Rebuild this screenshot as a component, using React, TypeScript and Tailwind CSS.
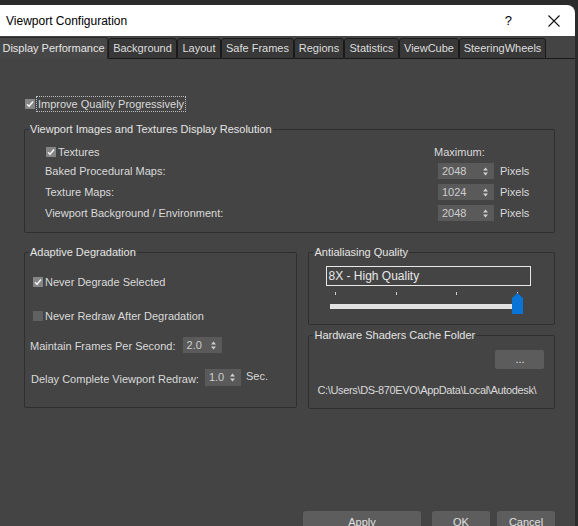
import React from "react";

const tabs = [
  { label: "Display Performance", w: "w-[108px]", active: true },
  { label: "Background", w: "w-[69px]" },
  { label: "Layout", w: "w-[44px]" },
  { label: "Safe Frames", w: "w-[73px]" },
  { label: "Regions", w: "w-[50px]" },
  { label: "Statistics", w: "w-[55px]" },
  { label: "ViewCube", w: "w-[60px]" },
  { label: "SteeringWheels", w: "w-[87px]" },
];

function Check({ checked }: { checked?: boolean }) {
  return (
    <span
      className={
        "flex h-[10px] w-[10px] shrink-0 items-center justify-center " +
        (checked ? "bg-[#858585]" : "bg-[#606060]")
      }
    >
      {checked && (
        <svg width="8" height="8" viewBox="0 0 8 8">
          <path d="M1 4.3 L3 6.3 L7 1.6" stroke="#f0f0f0" strokeWidth="1.6" fill="none" />
        </svg>
      )}
    </span>
  );
}

function Arrows() {
  return (
    <svg width="5" height="9" viewBox="0 0 5 9" className="shrink-0">
      <path d="M0 3.5 L2.5 0.5 L5 3.5 Z" fill="#cfcfcf" />
      <path d="M0 5.5 L2.5 8.5 L5 5.5 Z" fill="#cfcfcf" />
    </svg>
  );
}

function Spinner({ value, className }: { value: string; className: string }) {
  return (
    <div
      className={
        "flex items-center justify-between bg-[#5a5a5a] pl-[4px] pr-[6px] text-[#cdcdcd] " +
        className
      }
    >
      <span className="leading-none">{value}</span>
      <Arrows />
    </div>
  );
}

function Group({
  title,
  className,
  inner,
  children,
}: {
  title: string;
  className?: string;
  inner?: string;
  children: React.ReactNode;
}) {
  return (
    <fieldset className={"rounded-[2px] border border-[#2f2f2f] " + (className ?? "")}>
      <legend className="ml-[4px] px-[1px] leading-[14px] text-[#e4e4e4]">{title}</legend>
      <div className={inner}>{children}</div>
    </fieldset>
  );
}

export default function App() {
  return (
    <div className="h-[526px] w-[578px] overflow-hidden bg-[#2b2b2b] pt-[5px] font-['Liberation_Sans',Arial,sans-serif] text-[11px] text-[#dadada]">
      <div className="flex h-[521px] w-[575px] flex-col overflow-hidden rounded-tr-[8px] bg-[#444444]">
        {/* title bar */}
        <div className="flex h-[31px] shrink-0 items-center bg-white pl-[6px] pr-[15px] text-black">
          <span className="text-[12px]">Viewport Configuration</span>
          <span className="ml-auto mr-[36px] text-[13px]">?</span>
          <svg width="12" height="12" viewBox="0 0 12 12">
            <path d="M0.5 0.5 L11.5 11.5 M11.5 0.5 L0.5 11.5" stroke="#111" strokeWidth="1.1" />
          </svg>
        </div>

        {/* tabs */}
        <div className="flex h-[23px] shrink-0 items-end">
          {tabs.map((t) =>
            t.active ? (
              <div
                key={t.label}
                className={
                  "flex h-[22px] items-center justify-center rounded-tr-[3px] border-r border-t border-[#2a2a2a] bg-[#474747] text-[#e6e6e6] " +
                  t.w
                }
              >
                {t.label}
              </div>
            ) : (
              <div
                key={t.label}
                className={
                  "flex h-[21px] items-center justify-center rounded-t-[3px] border border-[#1a1a1a] bg-[#383838] text-[#dedede] " +
                  t.w
                }
              >
                {t.label}
              </div>
            )
          )}
          <div className="flex-1 border-b border-[#1a1a1a]" />
        </div>

        {/* body */}
        <div className="flex flex-col pl-[24px] pr-[20px]">
          <div className="mt-[37px] ml-[1px] flex h-[16px] items-center">
            <Check checked />
            <span className="ml-[1px] border border-dotted border-[#bdbdbd] px-[1px] leading-[14px]">
              Improve Quality Progressively
            </span>
          </div>

          <Group
            title="Viewport Images and Textures Display Resolution"
            className="mt-[10px]"
            inner="pb-[11px] pl-[20px]"
          >
            <div className="mt-[9px] flex h-[14px] items-center">
              <div className="flex w-[389px] items-center">
                <span className="ml-[1px]">
                  <Check checked />
                </span>
                <span className="ml-[2px]">Textures</span>
              </div>
              <span>Maximum:</span>
            </div>
            {[
              ["Baked Procedural Maps:", "2048"],
              ["Texture Maps:", "1024"],
              ["Viewport Background / Environment:", "2048"],
            ].map(([label, value], i) => (
              <div key={label} className={(i === 0 ? "mt-[4px]" : "mt-[5px]") + " flex h-[16px] items-center"}>
                <span className="w-[389px]">{label}</span>
                <Spinner value={value} className="ml-[4px] h-[16px] w-[56px]" />
                <span className="ml-[6px]">Pixels</span>
              </div>
            ))}
          </Group>

          <div className="mt-[12px] flex items-start gap-[11px]">
            <Group title="Adaptive Degradation" className="w-[274px]" inner="pb-[21px]">
              <div className="mt-[16px] ml-[8px] flex h-[14px] items-center">
                <Check checked />
                <span className="ml-[2px]">Never Degrade Selected</span>
              </div>
              <div className="mt-[20px] ml-[8px] flex h-[14px] items-center">
                <Check />
                <span className="ml-[2px]">Never Redraw After Degradation</span>
              </div>
              <div className="mt-[14px] ml-[5px] flex h-[16px] items-center">
                <span className="mt-[3px]">Maintain Frames Per Second:</span>
                <Spinner value="2.0" className="ml-[7px] h-[16px] w-[39px]" />
              </div>
              <div className="mt-[16px] ml-[6px] flex h-[17px] items-center">
                <span className="mt-[3px]">Delay Complete Viewport Redraw:</span>
                <Spinner value="1.0" className="ml-[6px] h-[17px] w-[36px]" />
                <span className="ml-[5px] -mt-[2px]">Sec.</span>
              </div>
            </Group>

            <div className="flex w-[247px] flex-col">
              <Group title="Antialiasing Quality" inner="pb-[9px] pl-[17px]">
                <div className="mt-[7px] flex h-[20px] w-[205px] items-center border border-[#e8e8e8] pl-[1px] text-[12px] text-[#e8e8e8]">
                  8X - High Quality
                </div>
                <svg width="205" height="24" viewBox="0 0 205 24" className="mt-[5px] block">
                  <path d="M9.5 1 V4 M70.5 1 V4 M130.5 1 V4 M191.5 1 V4" stroke="#d0d0d0" strokeWidth="1" />
                  <rect x="4" y="13" width="184" height="5" fill="#e2e2e2" />
                  <path d="M186 7 L191.5 2 L197 7 L197 23 L186 23 Z" fill="#0a74d6" />
                </svg>
              </Group>

              <Group title="Hardware Shaders Cache Folder" className="mt-[3px]" inner="pb-[11px] pl-[8px]">
                <div className="mt-[8px] ml-[178px] flex h-[19px] w-[49px] items-center justify-center rounded-[2px] bg-[#5c5c5c] text-[#e0e0e0]">
                  ...
                </div>
                <div className="mt-[14px] w-[229px] overflow-hidden whitespace-nowrap text-[11px] leading-[14px] tracking-[-0.35px]">
                  {"C:\\Users\\DS-870EVO\\AppData\\Local\\Autodesk\\"}
                </div>
              </Group>
            </div>
          </div>

          <div className="mt-[102px] flex justify-end">
            <div className="flex h-[23px] w-[118px] items-center justify-center rounded-t-[3px] bg-[#5d5d5d] text-[#e0e0e0]">
              Apply
            </div>
            <div className="ml-[11px] flex h-[23px] w-[58px] items-center justify-center rounded-t-[3px] bg-[#5d5d5d] text-[#e0e0e0]">
              OK
            </div>
            <div className="ml-[7px] flex h-[23px] w-[58px] items-center justify-center rounded-t-[3px] bg-[#5d5d5d] text-[#e0e0e0]">
              Cancel
            </div>
          </div>
        </div>
      </div>
    </div>
  );
}
